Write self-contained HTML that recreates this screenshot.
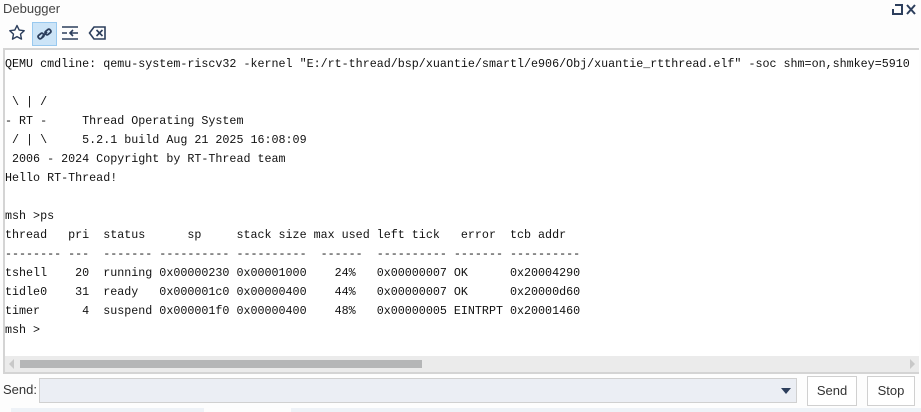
<!DOCTYPE html>
<html><head><meta charset="utf-8"><style>
*{margin:0;padding:0;box-sizing:border-box}
body{width:921px;height:412px;background:#fdfdfd;font-family:"Liberation Sans",sans-serif;position:relative;overflow:hidden;color:#333}
.abs{position:absolute}
pre{position:absolute;left:5px;top:55px;font-family:"Liberation Mono",monospace;font-size:11.7px;line-height:19px;color:#111;white-space:pre}
.btn{position:absolute;border:1px solid #d0d0d0;background:#fff;font-size:13px;text-align:center;line-height:27px;color:#333}
</style></head><body>
<div class="abs" style="left:3px;top:1px;font-size:13px;color:#444">Debugger</div>
<svg class="abs" style="left:890px;top:2px" width="30" height="14" viewBox="0 0 30 14"><path d="M5 3h7v9H3V7" fill="none" stroke="#2c3e5c" stroke-width="2"/><path d="M17 3l8 9M25 3l-8 9" stroke="#2c3e5c" stroke-width="2"/></svg>
<svg class="abs" style="left:8px;top:24px" width="18" height="18" viewBox="0 0 18 18"><path d="M9 1.5l2.2 4.6 5 .6-3.7 3.4 1 5-4.5-2.5-4.5 2.5 1-5L1.8 6.7l5-.6z" fill="none" stroke="#2c3e5c" stroke-width="1.4" stroke-linejoin="round"/></svg>
<div class="abs" style="left:32px;top:22px;width:25px;height:24px;background:#cce4f7;border:1px solid #99c9ef"></div>
<svg class="abs" style="left:36px;top:26px" width="17" height="17" viewBox="0 0 17 17"><g fill="none" stroke="#2c3e5c" stroke-width="1.8"><rect x="2" y="8" width="6" height="4" rx="1.5" transform="rotate(-40 5 10)"/><rect x="9" y="4" width="6" height="4" rx="1.5" transform="rotate(-40 12 6)"/><path d="M6 11l5-5"/></g></svg>
<svg class="abs" style="left:61px;top:25px" width="18" height="16" viewBox="0 0 18 16"><g stroke="#2c3e5c" stroke-width="1.6" fill="none"><path d="M1 2h16M1 14h16M1 8h5M17 8H9M12 5L9 8l3 3"/></g></svg>
<svg class="abs" style="left:88px;top:25px" width="19" height="16" viewBox="0 0 19 16"><g stroke="#2c3e5c" stroke-width="1.6" fill="none"><path d="M6 2h11v12H6L1.5 8z"/><path d="M8.5 5l6 6M14.5 5l-6 6"/></g></svg>
<div class="abs" style="left:3px;top:48px;width:916px;height:326px;border:2px solid #d4d4d4;border-right:none;background:#fff"></div>
<pre>QEMU cmdline: qemu-system-riscv32 -kernel "E:/rt-thread/bsp/xuantie/smartl/e906/Obj/xuantie_rtthread.elf" -soc shm=on,shmkey=5910

 \ | /
- RT -     Thread Operating System
 / | \     5.2.1 build Aug 21 2025 16:08:09
 2006 - 2024 Copyright by RT-Thread team
Hello RT-Thread!

msh >ps
thread   pri  status      sp     stack size max used left tick   error  tcb addr
-------- ---  ------- ---------- ----------  ------  ---------- ------- ----------
tshell    20  running 0x00000230 0x00001000    24%   0x00000007 OK      0x20004290
tidle0    31  ready   0x000001c0 0x00000400    44%   0x00000007 OK      0x20000d60
timer      4  suspend 0x000001f0 0x00000400    48%   0x00000005 EINTRPT 0x20001460
msh &gt;</pre>
<div class="abs" style="left:5px;top:356px;width:914px;height:16px;background:#ebebeb"></div>
<div class="abs" style="left:20px;top:360px;width:402px;height:8px;background:#b5b6b7"></div>
<svg class="abs" style="left:9px;top:359px" width="6" height="10"><path d="M5 0v10L0 5z" fill="#c8c8c8"/></svg>
<svg class="abs" style="left:910px;top:359px" width="6" height="10"><path d="M0 0v10l5-5z" fill="#c8c8c8"/></svg>
<div class="abs" style="left:3px;top:382px;font-size:13px;color:#333">Send:</div>
<div class="abs" style="left:39px;top:378px;width:758px;height:25px;background:#ebeef4;border:1px solid #d0d0d0"></div>
<svg class="abs" style="left:781px;top:388px" width="10" height="6"><path d="M0 0h10L5 6z" fill="#2c3e5c"/></svg>
<div class="btn" style="left:807px;top:376px;width:50px;height:30px">Send</div>
<div class="btn" style="left:867px;top:376px;width:48px;height:30px">Stop</div>
<div class="abs" style="left:11px;top:408px;width:193px;height:4px;background:#eef2f7"></div>
<div class="abs" style="left:291px;top:408px;width:630px;height:4px;background:#eef2f7"></div>
</body></html>
